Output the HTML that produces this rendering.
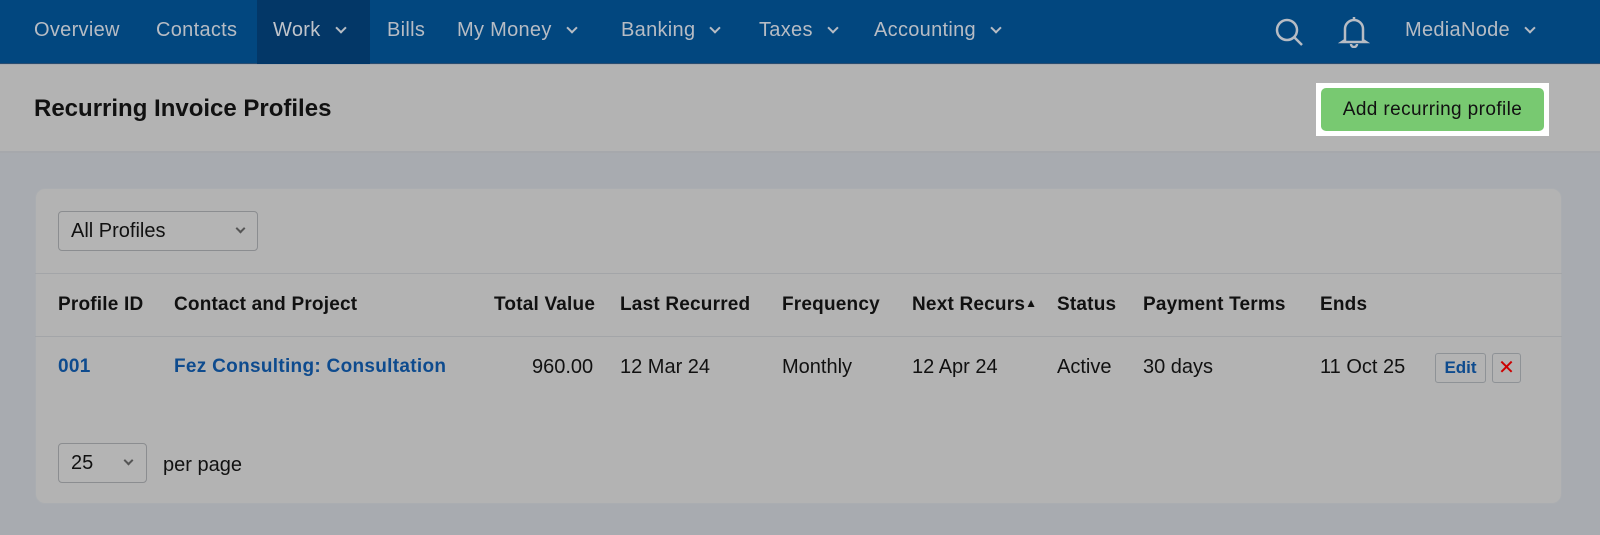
<!DOCTYPE html>
<html><head><style>
*{margin:0;padding:0;box-sizing:border-box}
body{width:1600px;height:535px;background:#a8abb0;font-family:"Liberation Sans",sans-serif;position:relative;overflow:hidden;color:#111}
.nav{position:absolute;left:0;top:0;width:1600px;height:64px;background:#02477f;border-bottom:1px solid #2a4d70}
.nav span{position:absolute;top:19px;font-size:20px;color:#b7bcc4;letter-spacing:0.3px}
.chev{display:inline-block;width:8px;height:8px;border-right:2px solid #b7bcc4;border-bottom:2px solid #b7bcc4;transform:rotate(45deg);margin-left:16px;position:relative;top:-4px}
.work{position:absolute;left:257px;top:0;width:113px;height:64px;background:#033767}
.hdr{position:absolute;left:0;top:65px;width:1600px;height:88px;background:#b3b3b3;border-bottom:2px solid #a6a8ac}
.title{position:absolute;left:34px;top:95px;font-size:24px;font-weight:bold}
.btnw{position:absolute;left:1316px;top:83px;width:233px;height:53px;background:#fff}
.btn{position:absolute;left:1321px;top:88px;width:223px;height:43px;background:#78c971;border-radius:5px;font-size:19px;text-align:center;line-height:43px;color:#111;letter-spacing:0.4px}
.card{position:absolute;left:35px;top:188px;width:1527px;height:316px;background:#b3b3b3;border-radius:10px;border:1px solid #aaadb1}
.sel{position:absolute;border:1px solid #8b8d90;border-radius:4px;font-size:20px;padding-left:12px;background:#b4b4b4}
.sel .c{position:absolute;top:13px;width:7px;height:7px;border-right:2px solid #555;border-bottom:2px solid #555;transform:rotate(45deg)}
.line{position:absolute;left:35px;width:1527px;height:1px;background:#a3a5a8}
.t{position:absolute;font-size:20px;white-space:nowrap}
.h{font-weight:bold;top:294px;font-size:19px;letter-spacing:0.2px}
.r{top:356px}
.b{color:#0e4b8e;font-weight:bold;font-size:19px;letter-spacing:0.3px}
</style></head><body>
<div class="nav">
<div class="work"></div>
<span style="left:34px">Overview</span>
<span style="left:156px">Contacts</span>
<span style="left:273px;color:#c0c4cb">Work<i class="chev"></i></span>
<span style="left:387px">Bills</span>
<span style="left:457px">My Money<i class="chev"></i></span>
<span style="left:621px">Banking<i class="chev"></i></span>
<span style="left:759px">Taxes<i class="chev"></i></span>
<span style="left:874px">Accounting<i class="chev"></i></span>
<svg style="position:absolute;left:1273px;top:16px" width="32" height="32" viewBox="0 0 32 32" fill="none" stroke="#b7bcc4" stroke-width="2.5"><circle cx="14" cy="14" r="10"/><line x1="21" y1="21" x2="29" y2="29"/></svg>
<svg style="position:absolute;left:1338px;top:14px" width="32" height="34" viewBox="0 0 32 34" fill="none" stroke="#b7bcc4" stroke-width="2.5"><path d="M7 26V15a9 9 0 0 1 18 0v11l3 2H4z"/><path d="M13 30a3 3 0 0 0 6 0"/><line x1="16" y1="3" x2="16" y2="6"/></svg>
<span style="left:1405px">MediaNode<i class="chev"></i></span>
</div>
<div class="hdr"></div>
<div class="title">Recurring Invoice Profiles</div>
<div class="btnw"></div><div class="btn">Add recurring profile</div>
<div class="card"></div>
<div class="sel" style="left:58px;top:211px;width:200px;height:40px;line-height:38px">All Profiles<i class="c" style="left:178px"></i></div>
<div class="line" style="top:273px"></div>
<div class="line" style="top:336px"></div>
<div class="t h" style="left:58px">Profile ID</div>
<div class="t h" style="left:174px">Contact and Project</div>
<div class="t h" style="left:494px">Total Value</div>
<div class="t h" style="left:620px">Last Recurred</div>
<div class="t h" style="left:782px">Frequency</div>
<div class="t h" style="left:912px">Next Recurs<span style="font-size:12px;position:relative;top:-3px">▲</span></div>
<div class="t h" style="left:1057px">Status</div>
<div class="t h" style="left:1143px">Payment Terms</div>
<div class="t h" style="left:1320px">Ends</div>
<div class="t r b" style="left:58px">001</div>
<div class="t r b" style="left:174px">Fez Consulting: Consultation</div>
<div class="t r" style="left:532px">960.00</div>
<div class="t r" style="left:620px">12 Mar 24</div>
<div class="t r" style="left:782px">Monthly</div>
<div class="t r" style="left:912px">12 Apr 24</div>
<div class="t r" style="left:1057px">Active</div>
<div class="t r" style="left:1143px">30 days</div>
<div class="t r" style="left:1320px">11 Oct 25</div>
<div style="position:absolute;left:1435px;top:353px;width:51px;height:30px;border:1px solid #8e9296;border-radius:3px;color:#0e4b8e;font-weight:bold;font-size:17px;text-align:center;line-height:28px">Edit</div>
<div style="position:absolute;left:1492px;top:353px;width:29px;height:30px;border:1px solid #8e9296;border-radius:3px;color:#c00;font-size:20px;text-align:center;line-height:28px">✕</div>
<div class="sel" style="left:58px;top:443px;width:89px;height:40px;line-height:38px">25<i class="c" style="left:66px"></i></div>
<div class="t" style="left:163px;top:454px">per page</div>
</body></html>
